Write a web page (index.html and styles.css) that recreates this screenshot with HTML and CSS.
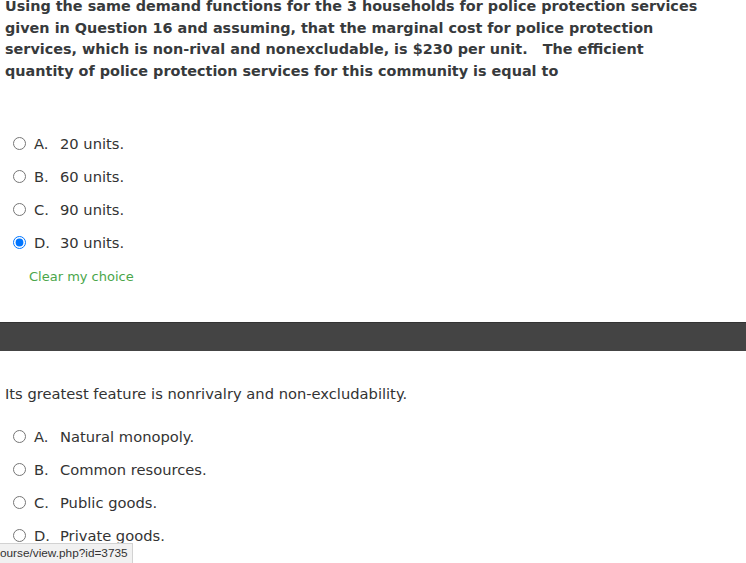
FILE: index.html
```html
<!DOCTYPE html>
<html>
<head>
<meta charset="utf-8">
<link rel="stylesheet" href="styles.css">
</head>
<body>
<div class="page">
  <section class="question first">
    <div class="qtext">Using the same demand functions for the 3 households for police protection services given in Question 16 and assuming, that the marginal cost for police protection services, which is non-rival and nonexcludable, is $230 per unit. &nbsp; The efficient quantity of police protection services for this community is equal to</div>
    <div class="answers">
      <label class="opt"><input type="radio" name="q1"><span class="letter">A.</span><span class="atext">20 units.</span></label>
      <label class="opt"><input type="radio" name="q1"><span class="letter">B.</span><span class="atext">60 units.</span></label>
      <label class="opt"><input type="radio" name="q1"><span class="letter">C.</span><span class="atext">90 units.</span></label>
      <label class="opt"><input type="radio" name="q1" checked><span class="letter">D.</span><span class="atext">30 units.</span></label>
    </div>
    <a class="clear" href="#">Clear my choice</a>
  </section>
  <div class="divider"></div>
  <section class="question second">
    <div class="qtext2">Its greatest feature is nonrivalry and non-excludability.</div>
    <div class="answers">
      <label class="opt"><input type="radio" name="q2"><span class="letter">A.</span><span class="atext">Natural monopoly.</span></label>
      <label class="opt"><input type="radio" name="q2"><span class="letter">B.</span><span class="atext">Common resources.</span></label>
      <label class="opt"><input type="radio" name="q2"><span class="letter">C.</span><span class="atext">Public goods.</span></label>
      <label class="opt"><input type="radio" name="q2"><span class="letter">D.</span><span class="atext">Private goods.</span></label>
    </div>
  </section>
</div>
<div class="status">ourse/view.php?id=3735</div>
</body>
</html>
```
FILE: styles.css
```css
html, body {
  margin: 0;
  padding: 0;
  background: #fff;
  overflow: hidden;
}
body {
  width: 746px;
  height: 563px;
  font-family: "DejaVu Sans", Verdana, sans-serif;
  color: #333;
  font-size: 14px;
}
.page {
  display: flex;
  flex-direction: column;
}
.question.first {
  margin-top: -4px;
}
.qtext {
  width: 712px;
  padding: 0 5px;
  font-weight: bold;
  font-size: 14.4px;
  line-height: 21.7px;
  color: #373a3c;
}
.answers {
  display: flex;
  flex-direction: column;
  padding-left: 12px;
}
.first .answers {
  margin-top: 44px;
}
.opt {
  display: flex;
  align-items: center;
  height: 33px;
  font-size: 14.7px;
  color: #333;
}
.opt input {
  margin: 0 8px 0 1px;
  width: 13px;
  height: 13px;
}
.letter {
  width: 26px;
}
.clear {
  display: block;
  margin: 10px 0 0 29px;
  color: #4aa64a;
  text-decoration: none;
  font-size: 13px;
}
.divider {
  margin-top: 38px;
  height: 28px;
  background: #444;
  border-top: 1px solid #333;
}
.qtext2 {
  margin-top: 33px;
  padding-left: 5px;
  font-size: 14.7px;
  color: #333;
  line-height: 20px;
}
.second .answers {
  margin-top: 16px;
}
.status {
  position: absolute;
  left: 0;
  bottom: 0;
  height: 20px;
  width: 133px;
  box-sizing: border-box;
  background: #f1f1f1;
  border-top: 1px solid #d2d2d2;
  border-right: 1px solid #d2d2d2;
  font-family: "Liberation Sans", Arial, sans-serif;
  font-size: 11.8px;
  line-height: 18px;
  color: #333;
  white-space: nowrap;
  overflow: hidden;
}
```
